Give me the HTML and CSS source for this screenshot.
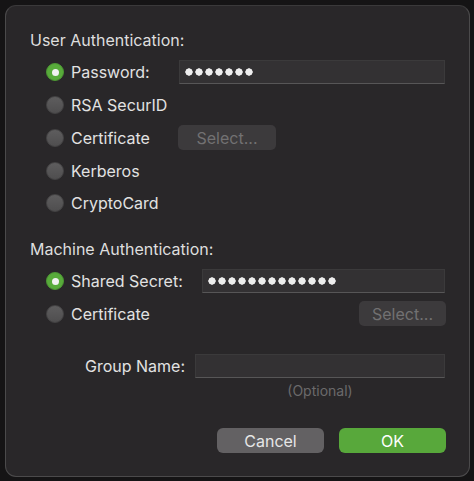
FILE: index.html
```html
<!DOCTYPE html>
<html lang="en">
<head>
  <meta charset="UTF-8">
  <meta name="viewport" content="width=device-width, initial-scale=1.0">
  <title>VPN Authentication</title>
  <link rel="stylesheet" href="styles.css">
</head>
<body>

  <div class="dialog">

    <!-- User authentication -->
    <div class="section-title">User Authentication:</div>
    <div class="options user">
      <div class="row">
        <label class="choice"><span class="radio checked"></span>Password:</label>
        <div class="field field-user"><span class="dots" style="width: 70px"></span></div>
      </div>
      <div class="row">
        <label class="choice"><span class="radio"></span>RSA SecurID</label>
      </div>
      <div class="row">
        <label class="choice"><span class="radio"></span>Certificate</label>
        <button class="select-btn" disabled>Select...</button>
      </div>
      <div class="row">
        <label class="choice"><span class="radio"></span>Kerberos</label>
      </div>
      <div class="row">
        <label class="choice"><span class="radio"></span>CryptoCard</label>
      </div>
    </div>

    <!-- Machine authentication -->
    <div class="section-title machine-title">Machine Authentication:</div>
    <div class="options machine">
      <div class="row">
        <label class="choice"><span class="radio checked"></span>Shared Secret:</label>
        <div class="field field-machine"><span class="dots" style="width: 130px"></span></div>
      </div>
      <div class="row">
        <label class="choice"><span class="radio"></span>Certificate</label>
        <button class="select-btn push-right" disabled>Select...</button>
      </div>
    </div>

    <!-- Group -->
    <div class="group-row">
      <label class="group-label">Group Name:</label>
      <div class="field field-group"></div>
    </div>
    <div class="hint">(Optional)</div>

    <div class="actions">
      <button class="btn btn-cancel">Cancel</button>
      <button class="btn btn-ok">OK</button>
    </div>

  </div>

</body>
</html>
```

FILE: styles.css
```css
body {
  margin: 0;
  background-color: #151415;
  font-family: Inter, "Liberation Sans", sans-serif;
  color: #e2e2e2;
}

.dialog {
  box-sizing: border-box;
  width: 465px;
  height: 472px;
  margin: 5px 0 0 5px;
  padding: 23px 23px 0 24px;
  background-color: #292729;
  border: 1px solid #4b4a4b;
  border-top-color: #3a393a;
  border-radius: 11px;
  display: flex;
  flex-direction: column;
}

.section-title {
  height: 22px;
  line-height: 22px;
  font-size: 16px;
  margin-bottom: 5px;
  color: #dedede;
}

.machine-title {
  margin-top: 18px;
}

.options {
  padding-left: 16px;
}

.row {
  height: 32.75px;
  display: flex;
  align-items: center;
}

.choice {
  display: flex;
  align-items: center;
  gap: 7px;
  font-size: 16px;
  flex-shrink: 0;
}

.user .choice {
  width: 133px;
}

.machine .choice {
  width: 156px;
}

.radio {
  box-sizing: border-box;
  width: 18px;
  height: 18px;
  border-radius: 50%;
  background: linear-gradient(#5e5d5e, #4f4e4f);
  border: 1px solid #444344;
  position: relative;
}

.radio.checked {
  background: #58ab3b;
  border-color: #4c9633;
}

.radio.checked::after {
  content: "";
  position: absolute;
  left: 4.5px;
  top: 4.5px;
  width: 7px;
  height: 7px;
  border-radius: 50%;
  background: #f2f2f2;
}

.field {
  box-sizing: border-box;
  height: 24px;
  background-color: #333133;
  border: 1px solid #3b3a3b;
  border-bottom-color: #575657;
  display: flex;
  align-items: center;
  padding-left: 5px;
}

.field-user {
  width: 266px;
}

.field-machine {
  width: 243px;
}

.dots {
  height: 8px;
  background-image: radial-gradient(circle at 4px 4px, #eeeeee 3.4px, transparent 3.9px);
  background-size: 10px 8px;
  background-repeat: repeat-x;
}

.select-btn {
  box-sizing: border-box;
  width: 98px;
  height: 25px;
  margin-left: -1px;
  border: none;
  border-radius: 5px;
  background-color: #3c3a3c;
  color: #727172;
  font-family: inherit;
  font-size: 16px;
  padding: 0;
}

.select-btn.push-right {
  width: 87px;
  margin-left: auto;
  margin-right: 0;
}

.group-row {
  margin-top: 24px;
  display: flex;
  align-items: center;
  height: 24px;
}

.group-label {
  width: 155px;
  padding-left: 6px;
  box-sizing: border-box;
  text-align: right;
  font-size: 16px;
  margin-right: 10px;
}

.field-group {
  width: 250px;
}

.hint {
  margin-top: 5px;
  margin-left: 165px;
  width: 250px;
  text-align: center;
  font-size: 14px;
  line-height: 16px;
  color: #6b6a6b;
}

.actions {
  margin-top: 29px;
  display: flex;
  justify-content: flex-end;
  gap: 15px;
}

.btn {
  width: 107px;
  height: 25px;
  border: none;
  border-radius: 6px;
  font-family: inherit;
  font-size: 16px;
  padding: 0;
  cursor: pointer;
}

.btn-cancel {
  background-color: #636163;
  color: #e6e6e6;
}

.btn-ok {
  background-color: #58a83b;
  color: #ffffff;
}
```
